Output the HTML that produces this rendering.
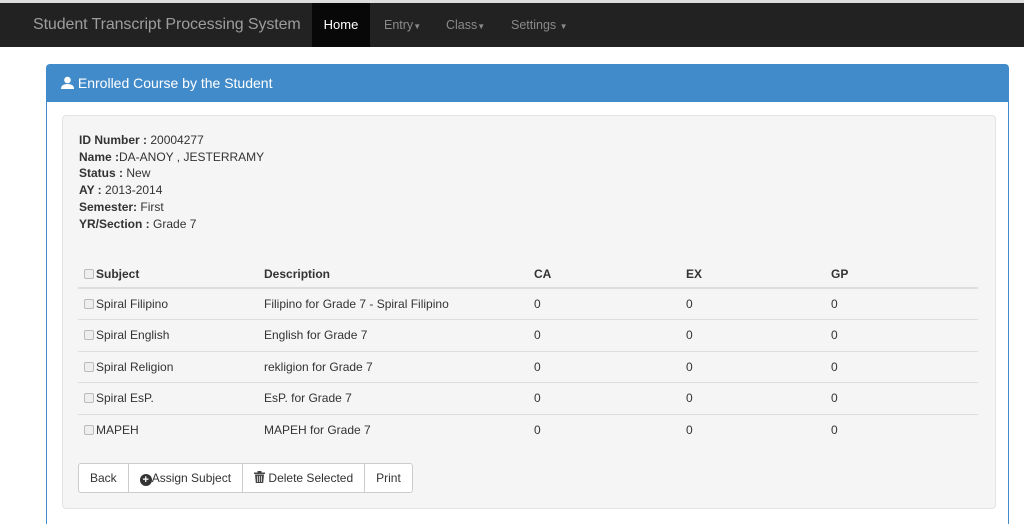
<!DOCTYPE html>
<html><head><style>
*{box-sizing:border-box}
html,body{margin:0;width:1024px;height:524px;overflow:hidden}
body{background:#fff;font-family:"Liberation Sans",sans-serif;font-size:12px;color:#333;position:relative}
.top{position:absolute;left:0;top:0;width:1024px;height:3px;background:#ddd}
.nav{position:absolute;left:0;top:3px;width:1024px;height:44px;background:#222}
.brand{position:absolute;left:33px;top:13px;font-size:16px;color:#9d9d9d;letter-spacing:-0.1px}
.home{position:absolute;left:312px;top:0;width:58px;height:44px;background:#080808;color:#fff;font-size:13px;text-align:center;line-height:44px}
.ni{position:absolute;top:0;line-height:44px;font-size:12.5px;color:#8a8a8a}
.ni small{font-size:8px}
.panel{position:absolute;left:46px;top:64px;width:963px;height:470px;border:1px solid #428bca;border-radius:4px}
.ph{height:37px;background:#428bca;color:#fff;font-size:14px;padding:10px 14px}
.well{position:absolute;left:15px;top:50px;width:934px;height:394px;background:#f5f5f5;border:1px solid #e3e3e3;border-radius:4px}
.info{position:absolute;left:16px;top:16px;line-height:16.7px}
table{position:absolute;left:15px;top:144px;width:900px;border-collapse:collapse}
td,th{text-align:left;padding:0 6px;height:31.5px;border-top:1px solid #ddd;font-size:12px}
th{border-top:none;border-bottom:2px solid #ddd;height:28px}
.cb{display:inline-block;width:10px;height:10px;border:1px solid #bbb;background:#eee;border-radius:2px;margin-right:2px;vertical-align:-1px}
.btns{position:absolute;left:15px;top:347px;height:30px;display:flex;border:1px solid #ccc;border-radius:3px;background:#fff}
.btns div{padding:0 11px;line-height:28px;border-right:1px solid #ccc;font-size:12px}
.btns div:last-child{border-right:none}
</style></head><body>
<div class="top"></div>
<div class="nav">
<div class="brand">Student Transcript Processing System</div>
<div class="home">Home</div>
<div class="ni" style="left:384px">Entry<small>▼</small></div>
<div class="ni" style="left:446px">Class<small>▼</small></div>
<div class="ni" style="left:511px">Settings <small>▼</small></div>
</div>
<div class="panel">
<div class="ph"><svg width="13" height="13" viewBox="0 0 13 13" style="vertical-align:-1px"><circle cx="6.5" cy="4" r="3.3" fill="#fff"/><path d="M0 13 Q0 8 6.5 8 Q13 8 13 13Z" fill="#fff"/></svg> Enrolled Course by the Student</div>
<div class="well">
<div class="info">
<b>ID Number :</b> 20004277<br><b>Name :</b>DA-ANOY , JESTERRAMY<br><b>Status :</b> New<br><b>AY :</b> 2013-2014<br><b>Semester:</b> First<br><b>YR/Section :</b> Grade 7
</div>
<table>
<tr><th style="width:180px"><span class="cb"></span>Subject</th><th style="width:270px">Description</th><th style="width:152px">CA</th><th style="width:145px">EX</th><th>GP</th></tr>
<tr><td><span class="cb"></span>Spiral Filipino</td><td>Filipino for Grade 7 - Spiral Filipino</td><td>0</td><td>0</td><td>0</td></tr>
<tr><td><span class="cb"></span>Spiral English</td><td>English for Grade 7</td><td>0</td><td>0</td><td>0</td></tr>
<tr><td><span class="cb"></span>Spiral Religion</td><td>rekligion for Grade 7</td><td>0</td><td>0</td><td>0</td></tr>
<tr><td><span class="cb"></span>Spiral EsP.</td><td>EsP. for Grade 7</td><td>0</td><td>0</td><td>0</td></tr>
<tr><td><span class="cb"></span>MAPEH</td><td>MAPEH for Grade 7</td><td>0</td><td>0</td><td>0</td></tr>
</table>
<div class="btns"><div>Back</div><div><span style="display:inline-block;width:12px;height:12px;border-radius:50%;background:#333;color:#fff;font-size:11px;line-height:12px;text-align:center;font-weight:bold;vertical-align:-1px">+</span>Assign Subject</div><div><svg width="11" height="12" viewBox="0 0 11 12" style="vertical-align:-1px"><rect x="0" y="1.5" width="11" height="1.5" fill="#444"/><rect x="3.5" y="0" width="4" height="2" fill="#444"/><path d="M1 3.5H10L9.2 12H1.8Z" fill="#444"/><path d="M3.5 5V11M5.5 5V11M7.5 5V11" stroke="#fff" stroke-width="0.7"/></svg> Delete Selected</div><div>Print</div></div>
</div>
</div>
</body></html>
